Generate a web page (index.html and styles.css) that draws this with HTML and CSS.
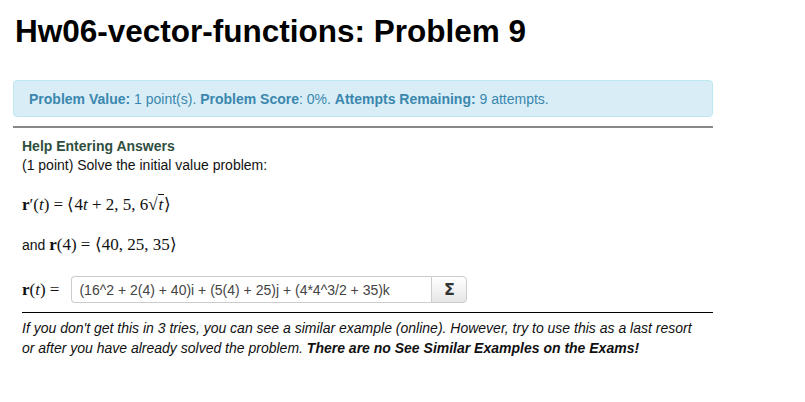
FILE: index.html
```html
<!DOCTYPE html>
<html>
<head>
<meta charset="utf-8">
<link rel="stylesheet" href="styles.css">
</head>
<body>
<div class="page">
  <h1 class="title">Hw06-vector-functions: Problem 9</h1>
  <div class="alert"><span><b>Problem Value:</b> 1 point(s). <b>Problem Score</b>: 0%. <b>Attempts Remaining:</b> 9 attempts.</span></div>
  <hr class="sep">
  <div class="problem">
    <div class="help">Help Entering Answers</div>
    <div class="intro">(1 point) Solve the initial value problem:</div>
    <div class="math m1"><b class="vec">r</b>′(<i>t</i>) = ⟨4<i>t</i> + 2, 5, 6<span class="sqrt">√<span class="rad"><i>t</i></span></span>⟩</div>
    <div class="line m2">and <span class="math"><b class="vec">r</b>(4) = ⟨40, 25, 35⟩</span></div>
    <div class="answer">
      <span class="math lbl"><b class="vec">r</b>(<i>t</i>) =</span>
      <div class="group">
        <div class="input">(16^2 + 2(4) + 40)i + (5(4) + 25)j + (4*4^3/2 + 35)k</div>
        <div class="btn">Σ</div>
      </div>
    </div>
    <div class="note">
      <i>If you don't get this in 3 tries, you can see a similar example (online). However, try to use this as a last resort or after you have already solved the problem. <b>There are no See Similar Examples on the Exams!</b></i>
    </div>
  </div>
</div>
</body>
</html>
```
FILE: styles.css
```css
* { box-sizing: border-box; }
html, body { margin: 0; padding: 0; background: #fff; }
body { font-family: "Liberation Sans", Arial, sans-serif; color: #222; }
.page { width: 700px; margin-left: 13px; padding-top: 13px; }
.title { margin: 0 0 0 2px; font-size: 31.5px; font-weight: bold; color: #000; line-height: 36px; }
.alert {
  margin-top: 31px;
  height: 37px;
  background: #d9edf7;
  border: 1px solid #bce8f1;
  border-radius: 4px;
  color: #3a87ad;
  font-size: 14px;
  padding: 0 15px;
  display: flex; align-items: center;
}
.alert b { font-weight: bold; }
.sep { margin: 9px 0 0 0; border: 0; border-top: 2px solid #888; height: 0; }
.problem { padding: 0 0 0 9px; }
.help { margin-top: 10px; font-size: 14px; font-weight: bold; color: #2f4f3f; line-height: 16px; }
.intro { margin-top: 2px; font-size: 14px; line-height: 18px; color: #111; }
.math { font-family: "Liberation Serif", "Times New Roman", serif; font-size: 17px; color: #111; }
.m1 { margin-top: 21px; line-height: 20px; }
.vec { font-weight: bold; }
.sqrt { display: inline-block; }
.rad { border-top: 1px solid #111; padding: 0 1px; }
.line { font-size: 14px; color: #111; }
.m2 { margin-top: 20px; line-height: 20px; }
.answer { display: flex; align-items: center; margin-top: 21px; gap: 12px; }
.lbl { font-size: 17px; }
.group { display: flex; height: 27px; }
.input {
  width: 360px; height: 27px;
  border: 1px solid #ccc; border-right: 0;
  border-radius: 4px 0 0 4px;
  font-size: 14px; color: #444;
  padding: 0 7px; display: flex; align-items: center;
}
.btn {
  width: 36px; height: 27px;
  border: 1px solid #ccc; border-radius: 0 4px 4px 0;
  background: linear-gradient(#fff, #e6e6e6);
  display: flex; align-items: center; justify-content: center;
  font-family: "DejaVu Sans", sans-serif; font-weight: bold; font-size: 16px; color: #333;
}
.note {
  margin-top: 9px;
  border-top: 1px solid #000;
  padding: 5px 16px 0 0;
  font-size: 14px; line-height: 20px; color: #111;
}
.note i { display: block; }
```
